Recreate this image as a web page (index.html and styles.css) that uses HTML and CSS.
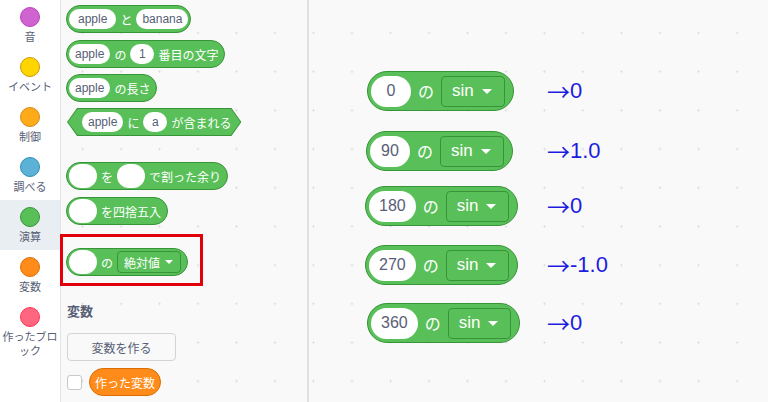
FILE: index.html
```html
<!DOCTYPE html>
<html lang="ja">
<head>
<meta charset="utf-8">
<title>演算ブロック</title>
<link rel="stylesheet" href="styles.css">
</head>
<body>
<div class="app">
  <nav class="categories">
    <div class="cat"><span class="dot dot-sound"></span><span class="cat-label">音</span></div>
    <div class="cat"><span class="dot dot-event"></span><span class="cat-label">イベント</span></div>
    <div class="cat"><span class="dot dot-control"></span><span class="cat-label">制御</span></div>
    <div class="cat"><span class="dot dot-sensing"></span><span class="cat-label">調べる</span></div>
    <div class="cat selected"><span class="dot dot-operator"></span><span class="cat-label">演算</span></div>
    <div class="cat"><span class="dot dot-variable"></span><span class="cat-label">変数</span></div>
    <div class="cat"><span class="dot dot-myblock"></span><span class="cat-label">作ったブロック</span></div>
  </nav>

  <aside class="palette">
    <div class="block end-oval b1"><span class="oval wide">apple</span><span class="lbl">と</span><span class="oval">banana</span></div>
    <div class="block b2"><span class="oval">apple</span><span class="lbl">の</span><span class="oval">1</span><span class="lbl">番目の文字</span></div>
    <div class="block b3"><span class="oval">apple</span><span class="lbl">の長さ</span></div>
    <div class="hex b4"><div class="hex-inner"><span class="oval">apple</span><span class="lbl">に</span><span class="oval">a</span><span class="lbl">が含まれる</span></div></div>
    <div class="block b5"><span class="oval empty"></span><span class="lbl">を</span><span class="oval empty"></span><span class="lbl">で割った余り</span></div>
    <div class="block b6"><span class="oval empty"></span><span class="lbl">を四捨五入</span></div>
    <div class="block b7"><span class="oval empty"></span><span class="lbl">の</span><span class="dd"><span>絶対値</span><span class="tri"></span></span></div>

    <div class="section-title">変数</div>
    <div class="make-var">変数を作る</div>
    <div class="var-row"><span class="checkbox"></span><span class="var-block">作った変数</span></div>

    <div class="highlight"></div>
  </aside>

  <main class="workspace">
    <div class="row r1">
      <div class="cblock"><span class="coval">0</span><span class="clbl">の</span><span class="cdd"><span>sin</span><span class="ctri"></span></span></div>
      <div class="result"><span class="arrow">→</span>0</div>
    </div>
    <div class="row r2">
      <div class="cblock"><span class="coval">90</span><span class="clbl">の</span><span class="cdd"><span>sin</span><span class="ctri"></span></span></div>
      <div class="result"><span class="arrow">→</span>1.0</div>
    </div>
    <div class="row r3">
      <div class="cblock"><span class="coval">180</span><span class="clbl">の</span><span class="cdd"><span>sin</span><span class="ctri"></span></span></div>
      <div class="result"><span class="arrow">→</span>0</div>
    </div>
    <div class="row r4">
      <div class="cblock"><span class="coval">270</span><span class="clbl">の</span><span class="cdd"><span>sin</span><span class="ctri"></span></span></div>
      <div class="result"><span class="arrow">→</span>-1.0</div>
    </div>
    <div class="row r5">
      <div class="cblock"><span class="coval">360</span><span class="clbl">の</span><span class="cdd"><span>sin</span><span class="ctri"></span></span></div>
      <div class="result"><span class="arrow">→</span>0</div>
    </div>
  </main>
</div>
</body>
</html>
```

FILE: styles.css
```css
body {
  margin: 0;
  font-family: "Liberation Sans", "Noto Sans CJK JP", sans-serif;
}

.app {
  display: flex;
  width: 768px;
  height: 402px;
  overflow: hidden;
  background-color: #f9f9f9;
  background-image: radial-gradient(circle, #dadada 0.8px, transparent 1.3px);
  background-size: 38.5px 38.7px;
  background-position: 255.75px 13.65px;
}

/* ---------- categories ---------- */
.categories {
  width: 60px;
  flex: none;
  background: #fff;
  border-right: 1px solid #e3e3e3;
}

.cat {
  height: 50px;
  box-sizing: border-box;
  padding-top: 7px;
  display: flex;
  flex-direction: column;
  align-items: center;
}

.cat.selected {
  background: #e9eef2;
}

.dot {
  width: 20px;
  height: 20px;
  border-radius: 50%;
  box-sizing: border-box;
  border: 1px solid;
  flex: none;
}

.dot-sound { background: #cf63cf; border-color: #bd42bd; }
.dot-event { background: #ffd500; border-color: #cc9900; }
.dot-control { background: #ffab19; border-color: #cf8b17; }
.dot-sensing { background: #5cb1d6; border-color: #2e8eb8; }
.dot-operator { background: #59c059; border-color: #389438; }
.dot-variable { background: #ff8c1a; border-color: #db6e00; }
.dot-myblock { background: #ff6680; border-color: #ff3355; }

.cat-label {
  margin-top: 3px;
  font-size: 11px;
  line-height: 14px;
  color: #575e75;
  text-align: center;
  width: 60px;
}

/* ---------- palette ---------- */
.palette {
  width: 248px;
  flex: none;
  box-sizing: border-box;
  border-right: 2px solid #e0e0e0;
  padding: 5px 0 0 5px;
  position: relative;
  display: flex;
  flex-direction: column;
  align-items: flex-start;
}

.block {
  display: inline-flex;
  align-items: center;
  height: 28px;
  box-sizing: border-box;
  border: 1px solid #389438;
  background: #59c059;
  border-radius: 14px;
  padding: 0 6px 0 2px;
  gap: 4px;
  color: #fff;
  font-size: 12px;
  flex: none;
}

.block.end-oval {
  padding-right: 2px;
}

.lbl {
  white-space: nowrap;
}

.oval {
  height: 20px;
  min-width: 24px;
  padding: 0 6px;
  box-sizing: border-box;
  background: #fff;
  border-radius: 10px;
  color: #575e75;
  font-size: 12px;
  display: inline-flex;
  align-items: center;
  justify-content: center;
}

.oval.wide {
  padding: 0 9px;
}

.oval.empty {
  width: 28px;
  height: 24px;
  border-radius: 12px;
}

.hex {
  height: 28px;
  box-sizing: border-box;
  padding: 1px;
  margin-left: 1px;
  background: #389438;
  clip-path: polygon(10px 0, calc(100% - 10px) 0, 100% 50%, calc(100% - 10px) 100%, 10px 100%, 0 50%);
}

.hex-inner {
  height: 26px;
  box-sizing: border-box;
  display: flex;
  align-items: center;
  gap: 4px;
  padding: 0 9px 0 14px;
  background: #59c059;
  color: #fff;
  font-size: 12px;
  clip-path: polygon(9.5px 0, calc(100% - 9.5px) 0, 100% 50%, calc(100% - 9.5px) 100%, 9.5px 100%, 0 50%);
}

.b1 { margin-top: 0; }
.b2 { margin-top: 7px; }
.b3 { margin-top: 6px; }
.b4 { margin-top: 6px; }
.b5 { margin-top: 26px; }
.b6 { margin-top: 7px; }
.b7 { margin-top: 23px; }

.dd {
  height: 22px;
  box-sizing: border-box;
  border: 1px solid #389438;
  border-radius: 4px;
  padding: 0 7px 0 6px;
  display: inline-flex;
  align-items: center;
  gap: 5px;
}

.tri {
  width: 0;
  height: 0;
  border-left: 4px solid transparent;
  border-right: 4px solid transparent;
  border-top: 4px solid #fff;
}

.section-title {
  margin-top: 28px;
  margin-left: 1px;
  font-size: 13px;
  line-height: 16px;
  font-weight: bold;
  color: #575e75;
}

.make-var {
  margin-top: 13px;
  margin-left: 1px;
  width: 109px;
  height: 28px;
  box-sizing: border-box;
  border: 1px solid #d3d3d3;
  border-radius: 4px;
  background: #f9f9f9;
  color: #575e75;
  font-size: 12px;
  display: flex;
  align-items: center;
  justify-content: center;
}

.var-row {
  margin-top: 7px;
  margin-left: 1px;
  display: flex;
  align-items: center;
  gap: 7px;
}

.checkbox {
  width: 15px;
  height: 15px;
  box-sizing: border-box;
  border: 1px solid #c8c8c8;
  border-radius: 3px;
  background: #fff;
}

.var-block {
  height: 28px;
  box-sizing: border-box;
  border: 1px solid #db6e00;
  background: #ff8c1a;
  border-radius: 14px;
  padding: 0 5px;
  color: #fff;
  font-size: 12px;
  display: inline-flex;
  align-items: center;
}

.highlight {
  position: absolute;
  left: -1px;
  top: 234px;
  width: 143px;
  height: 52px;
  box-sizing: border-box;
  border: 3px solid #e3000b;
}

/* ---------- workspace ---------- */
.workspace {
  flex: 1;
  display: flex;
  flex-direction: column;
  padding-top: 71px;
}

.row {
  display: grid;
  grid-template-columns: 239px auto;
  align-items: center;
}

.r2 { margin-top: 20px; }
.r3 { margin-top: 15px; }
.r4 { margin-top: 19px; }
.r5 { margin-top: 18px; }

.cblock {
  justify-self: start;
  display: inline-flex;
  align-items: center;
  height: 40px;
  box-sizing: border-box;
  border: 1px solid #389438;
  background: #59c059;
  border-radius: 20px;
  padding: 0 8px 0 3px;
  gap: 7px;
  color: #fff;
}

.r1 .cblock { margin-left: 58px; }
.r2 .cblock { margin-left: 57px; }
.r3 .cblock { margin-left: 56px; }
.r4 .cblock { margin-left: 56px; }
.r5 .cblock { margin-left: 58px; }

.coval {
  height: 31px;
  min-width: 40px;
  padding: 0 10px;
  box-sizing: border-box;
  border-radius: 16px;
  background: #fff;
  color: #575e75;
  font-size: 16px;
  display: inline-flex;
  align-items: center;
  justify-content: center;
}

.clbl {
  font-size: 16px;
}

.cdd {
  height: 31px;
  box-sizing: border-box;
  border: 1px solid #389438;
  border-radius: 4px;
  padding: 0 12px 0 10px;
  display: inline-flex;
  align-items: center;
  gap: 8px;
  font-size: 17px;
}

.ctri {
  width: 0;
  height: 0;
  border-left: 5px solid transparent;
  border-right: 5px solid transparent;
  border-top: 5px solid #fff;
}

.result {
  font-size: 22px;
  color: #1d1de0;
  white-space: nowrap;
  display: flex;
  align-items: center;
}

.arrow {
  font-family: "Noto Sans CJK JP", sans-serif;
  font-size: 23px;
  line-height: 1;
  margin-left: -1px;
}
```
